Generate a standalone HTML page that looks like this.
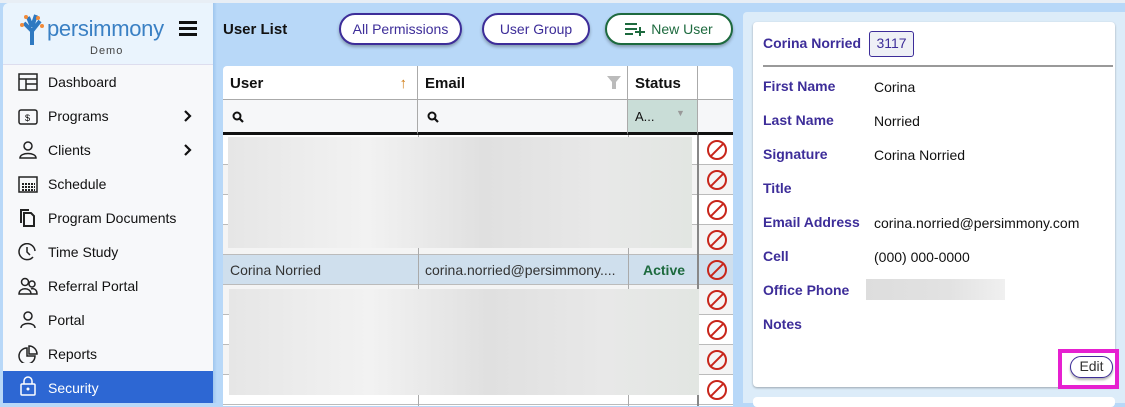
<!DOCTYPE html>
<html><head><meta charset="utf-8"><style>
*{box-sizing:border-box;margin:0;padding:0}
body{width:1125px;height:403px;overflow:hidden;background:#b8d8f8;font-family:"Liberation Sans",sans-serif;position:relative;color:#111}
.abs{position:absolute}
#side{left:3px;top:3px;width:210px;height:400px;background:#f7f8fa;border-radius:6px 0 0 0;overflow:hidden}
#sh{left:0;top:0;width:210px;height:62px;background:#eaf4fd;border-bottom:1px solid #dde}
.nav{position:absolute;left:0;width:210px;height:34px;font-size:14px;display:flex;align-items:center;padding-left:45px}
.nav svg{position:absolute;left:15px;top:8px}
.chev{position:absolute;left:181px;top:11px}
.btn{position:absolute;top:13px;height:32px;border:2px solid #3d2d99;border-radius:16px;background:#fff;color:#3d2d99;font-size:14px;display:flex;align-items:center;justify-content:center;box-shadow:0 2px 3px rgba(0,0,0,.3)}
#tbl{left:223px;top:66px;width:510px;height:340px;background:#fff;border-radius:4px 4px 0 0;overflow:hidden}
.th{position:absolute;top:0;height:34px;font-weight:bold;font-size:15px;padding:9px 7px;border-right:1px solid #aaa;border-bottom:1px solid #aaa}
.tf{position:absolute;top:34px;height:35px;background:#f6f7f9;border-right:1px solid #aaa;border-bottom:3px solid #111}
.tf svg{position:absolute;left:9px;top:11px}
.row{position:absolute;left:0;width:510px;height:30px;border-bottom:1px solid #bbb}
.no{position:absolute;left:484px;width:20px;height:20px;border:2px solid #c8261b;border-radius:50%}
.no:after{content:"";position:absolute;left:7px;top:-2px;width:2px;height:20px;background:#c8261b;transform:rotate(45deg)}
.blur{position:absolute;background:linear-gradient(90deg,#e6e6e6,#f2f2f2 30%,#e0e0e0 55%,#e8e8e8 80%,#e2e6e2)}
.lab{position:absolute;left:763px;color:#3d2d99;font-size:14px;font-weight:bold}
.val{position:absolute;left:874px;font-size:14px}
</style></head><body>
<div class="abs" style="left:0;top:0;width:1125px;height:3px;background:#e8eef5"></div>
<div id="side" class="abs">
 <div id="sh" class="abs">
  <svg class="abs" style="left:15px;top:8px" width="28" height="34" viewBox="0 0 28 34"><path d="M14 34 L14 18 M14 20 L6 12 M14 20 L22 10 M14 16 L10 6 M14 16 L18 4" stroke="#2f79c1" stroke-width="4" fill="none"/><circle cx="8" cy="6" r="2" fill="#f08a3a"/><circle cx="20" cy="7" r="2" fill="#f08a3a"/><circle cx="4" cy="14" r="2" fill="#f08a3a"/><circle cx="24" cy="15" r="2" fill="#f08a3a"/></svg>
  <div class="abs" style="left:44px;top:13px;font-size:22px;color:#3a80c4;letter-spacing:-0.3px">persimmony</div>
  <div class="abs" style="left:87px;top:42px;font-size:11px;color:#444;letter-spacing:1px">Demo</div>
  <div class="abs" style="left:176px;top:18px;width:18px;height:3px;background:#111;box-shadow:0 6px 0 #111,0 12px 0 #111"></div>
 </div>
 <div class="nav" style="top:62px"><svg width="20" height="18"><rect x="1" y="1" width="18" height="16" fill="none" stroke="#222" stroke-width="1.5"/><path d="M1 6H19M8 6V17M8 11H19" stroke="#222" stroke-width="1.5"/></svg>Dashboard</div>
 <div class="nav" style="top:96px"><svg width="20" height="18"><rect x="1" y="3" width="18" height="14" rx="2" fill="none" stroke="#222" stroke-width="1.5"/><text x="7" y="14" font-size="9" font-family="Liberation Sans">$</text></svg>Programs<svg class="chev" style="left:181px;top:11px" width="8" height="12"><path d="M1 1L6 6L1 11" stroke="#111" stroke-width="2.2" fill="none"/></svg></div>
 <div class="nav" style="top:130px"><svg width="20" height="18"><circle cx="10" cy="5" r="4" fill="none" stroke="#222" stroke-width="1.5"/><path d="M2 17C2 11 18 11 18 17Z" fill="none" stroke="#222" stroke-width="1.5"/></svg>Clients<svg class="chev" style="left:181px;top:11px" width="8" height="12"><path d="M1 1L6 6L1 11" stroke="#111" stroke-width="2.2" fill="none"/></svg></div>
 <div class="nav" style="top:164px"><svg width="20" height="18"><rect x="1" y="2" width="18" height="15" fill="none" stroke="#222" stroke-width="1.5"/><path d="M4 9H17M4 12H17M4 15H17" stroke="#222" stroke-width="2" stroke-dasharray="2 1"/></svg>Schedule</div>
 <div class="nav" style="top:198px"><svg width="20" height="18"><path d="M3 14V1H11M6 17V4H13L16 7V17Z" fill="none" stroke="#222" stroke-width="2"/></svg>Program Documents</div>
 <div class="nav" style="top:232px"><svg width="20" height="18"><path d="M15 14A8 8 0 1 1 17 8" fill="none" stroke="#222" stroke-width="1.5"/><path d="M9 4V9L12 12" fill="none" stroke="#222" stroke-width="1.5"/></svg>Time Study</div>
 <div class="nav" style="top:266px"><svg width="20" height="18"><circle cx="7" cy="5" r="3.5" fill="none" stroke="#222" stroke-width="1.5"/><circle cx="14" cy="7" r="3" fill="none" stroke="#222" stroke-width="1.5"/><path d="M1 17C1 10 13 10 13 17ZM13 17H19C19 12 15 11 13 12" fill="none" stroke="#222" stroke-width="1.5"/></svg>Referral Portal</div>
 <div class="nav" style="top:300px"><svg width="20" height="18"><circle cx="10" cy="5" r="4" fill="none" stroke="#222" stroke-width="1.5"/><path d="M3 17C3 11 17 11 17 17" fill="none" stroke="#222" stroke-width="1.5"/></svg>Portal</div>
 <div class="nav" style="top:334px"><svg width="20" height="18"><path d="M9 3A8 8 0 1 0 17 11H9Z" fill="none" stroke="#222" stroke-width="1.5"/><path d="M11 1V9H19A8 8 0 0 0 11 1Z" fill="none" stroke="#222" stroke-width="1.5"/></svg>Reports</div>
 <div class="nav" style="top:368px;background:#2d67d3;color:#fff"><svg width="20" height="20" style="top:5px"><rect x="3" y="8" width="14" height="11" rx="1" fill="none" stroke="#fff" stroke-width="1.5"/><path d="M6 8V5A4 4 0 0 1 14 5V8" fill="none" stroke="#fff" stroke-width="1.5"/><circle cx="10" cy="13" r="1.5" fill="#fff"/></svg>Security</div>
</div>
<div class="abs" style="left:213px;top:3px;width:4px;height:400px;background:linear-gradient(90deg,#9fc6ee,#b8d8f8)"></div>
<div class="abs" style="left:223px;top:21px;font-size:15px;font-weight:bold">User List</div>
<div class="btn" style="left:339px;width:123px">All Permissions</div>
<div class="btn" style="left:482px;width:108px">User Group</div>
<div class="btn" style="left:605px;width:128px;border-color:#1d6a3e;color:#1d6a3e"><svg width="20" height="14" style="margin-right:6px"><path d="M0 2H12M0 7H12M0 12H8M10 10H20M15 5V15" stroke="#1d6a3e" stroke-width="2"/></svg>New User</div>
<div id="tbl" class="abs">
 <div class="th" style="left:0;width:195px">User<span style="position:absolute;right:10px;color:#d07a10;font-weight:normal">↑</span></div>
 <div class="th" style="left:195px;width:210px">Email<svg style="position:absolute;right:6px;top:10px" width="14" height="13"><path d="M0 0H14L9 6V13H5V6Z" fill="#bbb"/></svg></div>
 <div class="th" style="left:405px;width:70px">Status</div>
 <div class="th" style="left:475px;width:35px;border-right:none"></div>
 <div class="tf" style="left:0;width:195px"><svg width="12" height="12"><circle cx="5" cy="5" r="3.5" fill="none" stroke="#111" stroke-width="2"/><path d="M7.5 7.5L11 11" stroke="#111" stroke-width="2.2"/></svg></div>
 <div class="tf" style="left:195px;width:210px"><svg width="12" height="12"><circle cx="5" cy="5" r="3.5" fill="none" stroke="#111" stroke-width="2"/><path d="M7.5 7.5L11 11" stroke="#111" stroke-width="2.2"/></svg></div>
 <div class="tf" style="left:405px;width:70px;background:#c9ddd7"><span style="position:absolute;left:7px;top:9px;font-size:13px">A...</span><span style="position:absolute;left:48px;top:8px;font-size:9px;color:#999">▼</span></div>
 <div class="tf" style="left:475px;width:35px;border-right:none"></div>
 <div class="row" style="top:69px"></div><div class="row" style="top:99px;background:#f4f4f4"></div><div class="row" style="top:129px"></div><div class="row" style="top:159px;background:#f4f4f4"></div>
 <div class="row" style="top:189px;background:#cfdfed"><span style="position:absolute;left:7px;top:7px;font-size:14px;color:#333">Corina Norried</span><span style="position:absolute;left:202px;top:7px;font-size:14px;color:#333">corina.norried@persimmony....</span><span style="position:absolute;left:420px;top:7px;font-size:14px;font-weight:bold;color:#1d6a3e">Active</span></div>
 <div class="row" style="top:219px;background:#f4f4f4"></div><div class="row" style="top:249px"></div><div class="row" style="top:279px;background:#f4f4f4"></div><div class="row" style="top:309px"></div>
 <div class="abs" style="left:195px;top:69px;width:1px;height:275px;background:#aaa"></div>
 <div class="abs" style="left:405px;top:69px;width:1px;height:275px;background:#aaa"></div>
 <div class="abs" style="left:474px;top:69px;width:2px;height:275px;background:#888"></div>
 <div class="no" style="top:74px"></div><div class="no" style="top:104px"></div><div class="no" style="top:134px"></div><div class="no" style="top:164px"></div><div class="no" style="top:194px"></div><div class="no" style="top:224px"></div><div class="no" style="top:254px"></div><div class="no" style="top:284px"></div><div class="no" style="top:314px"></div>
 <div class="blur" style="left:5px;top:71px;width:464px;height:111px"></div>
 <div class="blur" style="left:6px;top:223px;width:470px;height:106px"></div>
</div>
<div class="abs" style="left:743px;top:12px;width:382px;height:391px;background:#dcecf9;border-radius:4px 0 0 0"></div>
<div class="abs" style="left:753px;top:22px;width:362px;height:365px;background:#fff;border-radius:4px;box-shadow:0 1px 2px rgba(0,0,0,.3)"></div>
<div class="abs" style="left:753px;top:397px;width:362px;height:10px;background:#fff;border-radius:4px"></div>
<div class="lab" style="top:35px">Corina Norried</div>
<div class="abs" style="left:869px;top:31px;width:45px;height:26px;border:1.5px solid #3d2d99;border-radius:3px;background:#eef0f6;color:#3d2d99;font-size:14px;text-align:center;line-height:23px">3117</div>
<div class="abs" style="left:763px;top:65px;width:350px;height:1.5px;background:#999"></div>
<div class="lab" style="top:78px">First Name</div><div class="val" style="top:79px">Corina</div>
<div class="lab" style="top:112px">Last Name</div><div class="val" style="top:113px">Norried</div>
<div class="lab" style="top:146px">Signature</div><div class="val" style="top:147px">Corina Norried</div>
<div class="lab" style="top:180px">Title</div>
<div class="lab" style="top:214px">Email Address</div><div class="val" style="top:215px">corina.norried@persimmony.com</div>
<div class="lab" style="top:248px">Cell</div><div class="val" style="top:249px">(000) 000-0000</div>
<div class="lab" style="top:282px">Office Phone</div><div class="abs" style="left:866px;top:279px;width:139px;height:21px;background:linear-gradient(90deg,#ddd,#e2e2e2 60%,#f0f0f0)"></div>
<div class="lab" style="top:316px">Notes</div>
<div class="abs" style="left:1058px;top:349px;width:61px;height:40px;border:4px solid #e620d0"></div>
<div class="abs" style="left:1070px;top:356px;width:43px;height:22px;border:1.5px solid #3d2d99;border-radius:11px;font-size:14px;text-align:center;line-height:19px;color:#333;box-shadow:0 2px 2px rgba(0,0,0,.3);background:#fff">Edit</div>
</body></html>
